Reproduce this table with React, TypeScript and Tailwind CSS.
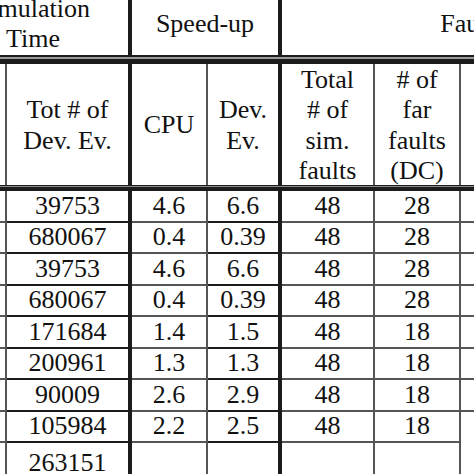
const rows = [
  ['39753', '4.6', '6.6', '48', '28'],
  ['680067', '0.4', '0.39', '48', '28'],
  ['39753', '4.6', '6.6', '48', '28'],
  ['680067', '0.4', '0.39', '48', '28'],
  ['171684', '1.4', '1.5', '48', '18'],
  ['200961', '1.3', '1.3', '48', '18'],
  ['90009', '2.6', '2.9', '48', '18'],
  ['105984', '2.2', '2.5', '48', '18'],
  ['263151', '', '', '', ''],
];

const thin = 'border-r-2 border-[#555]';
const thick = 'border-r-4 border-[#1c1c1c]';

function Lines({ lines }: { lines: string[] }) {
  return (
    <>
      {lines.map((l) => (
        <span key={l} className="block whitespace-nowrap">
          {l}
        </span>
      ))}
    </>
  );
}

export default function App() {
  return (
    <div className="w-[474px] h-[474px] overflow-hidden bg-white">
      <div className="-ml-[62px] -mt-[7px] grid grid-cols-[69px_125px_76px_74px_93px_86px_201px] font-['Liberation_Serif',serif] text-[26px] leading-[30.5px] text-[#111] text-center">
        {/* top header */}
        <div className={`col-span-2 h-[62px] flex flex-col justify-center ${thick}`}>
          <Lines lines={['Simulation', 'Time']} />
        </div>
        <div className={`col-span-2 h-[62px] flex flex-col justify-center ${thick}`}>
          <Lines lines={['Speed-up']} />
        </div>
        <div className="col-span-3 h-[62px] flex flex-col justify-center">
          <Lines lines={['Faults']} />
        </div>

        {/* double rule */}
        <div className="col-span-7 h-[9px] border-t-2 border-b-[5px] border-[#1c1c1c] bg-[#9a9a9a]" />

        {/* sub header */}
        <div className={`h-[121px] pt-[2px] flex flex-col justify-center ${thin}`} />
        <div className={`h-[121px] pt-[2px] flex flex-col justify-center ${thick}`}>
          <Lines lines={['Tot # of', 'Dev. Ev.']} />
        </div>
        <div className={`h-[121px] pt-[2px] flex flex-col justify-center ${thin}`}>
          <Lines lines={['CPU']} />
        </div>
        <div className={`h-[121px] pt-[2px] flex flex-col justify-center ${thick}`}>
          <Lines lines={['Dev.', 'Ev.']} />
        </div>
        <div className={`h-[121px] pt-[2px] flex flex-col justify-center ${thin}`}>
          <Lines lines={['Total', '# of', 'sim.', 'faults']} />
        </div>
        <div className={`h-[121px] pt-[2px] flex flex-col justify-center ${thin}`}>
          <Lines lines={['# of', 'far', 'faults', '(DC)']} />
        </div>
        <div className={`h-[121px] ${thin}`} />

        {/* double rule */}
        <div className="col-span-7 h-[6px] border-t-[1.5px] border-b-4 border-[#1c1c1c] bg-[#8a8a8a]" />

        {/* data */}
        {rows.map((r, i) => {
          const last = i === rows.length - 1;
          const h = last ? 'h-[40px]' : 'h-[31.5px] border-b-2';
          return [
            <div key={`a${i}`} className={`${h} ${thin}`} />,
            <div key={`b${i}`} className={`${h} ${thick} flex items-center justify-center`}>{r[0]}</div>,
            <div key={`c${i}`} className={`${h} ${thin} flex items-center justify-center`}>{r[1]}</div>,
            <div key={`d${i}`} className={`${h} ${thick} flex items-center justify-center`}>{r[2]}</div>,
            <div key={`e${i}`} className={`${h} ${thin} flex items-center justify-center`}>{r[3]}</div>,
            <div key={`f${i}`} className={`${h} ${thin} flex items-center justify-center`}>{r[4]}</div>,
            <div key={`g${i}`} className={`${i >= rows.length - 2 ? 'h-[31.5px]' : h} ${thin}`} />,
          ];
        })}
      </div>
    </div>
  );
}
